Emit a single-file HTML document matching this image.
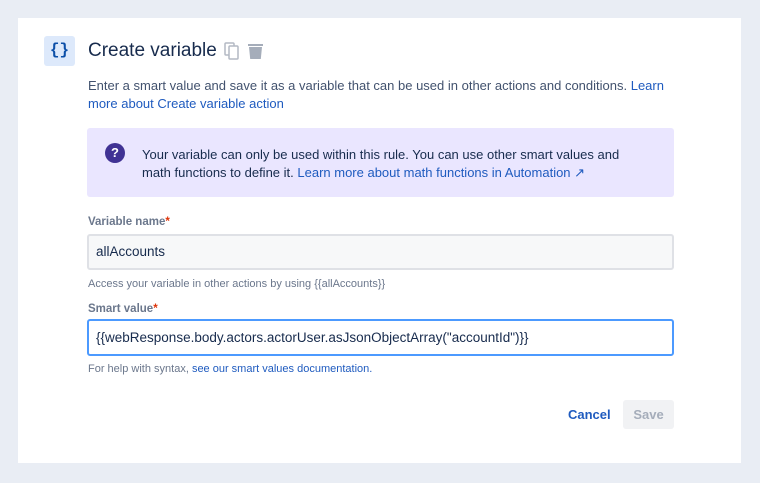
<!DOCTYPE html>
<html><head><meta charset="utf-8"><style>
*{margin:0;padding:0;box-sizing:border-box}
body{width:760px;height:483px;background:#e9edf4;font-family:"Liberation Sans",sans-serif;position:relative;overflow:hidden;color:#172b4d}
.card{position:absolute;left:18px;top:18px;width:723px;height:445px;background:#fff}
.a{position:absolute}
.link{color:#1f5bbf}
</style></head><body>
<div class="card"></div>
<div class="a" style="left:44px;top:36px;width:31px;height:30px;background:#dde9fb;border-radius:3px;color:#0c4fa8;font-weight:bold;font-size:16px;text-align:center;line-height:29px;font-family:'Liberation Mono',monospace">{}</div>
<div class="a" style="left:88px;top:40px;font-size:19px;color:#172b4d">Create variable</div>
<svg class="a" style="left:224px;top:42px" width="40" height="18" viewBox="0 0 40 18"><rect x="1" y="1" width="9" height="12" rx="1" fill="none" stroke="#b3b9c4" stroke-width="1.5"/><rect x="5" y="4" width="9" height="13" rx="1" fill="#fff" stroke="#b3b9c4" stroke-width="1.5"/><rect x="24" y="2" width="15" height="2" fill="#a5adba"/><path d="M25 5h13l-1.2 12h-10.6z" fill="#a5adba"/></svg>
<div class="a" style="left:88px;top:77px;width:600px;font-size:13px;line-height:18px;color:#42526e">Enter a smart value and save it as a variable that can be used in other actions and conditions. <span class="link">Learn more about Create variable action</span></div>
<div class="a" style="left:87px;top:128px;width:587px;height:69px;background:#eae6ff;border-radius:3px"></div>
<div class="a" style="left:105px;top:143px;width:20px;height:20px;border-radius:50%;background:#403294;color:#fff;font-weight:bold;font-size:13px;text-align:center;line-height:20px">?</div>
<div class="a" style="left:142px;top:146px;width:495px;font-size:13px;line-height:18px;color:#172b4d">Your variable can only be used within this rule. You can use other smart values and math functions to define it. <span class="link">Learn more about math functions in Automation ↗</span></div>
<div class="a" style="left:88px;top:216px;font-size:11.5px;font-weight:600;color:#6b778c">Variable name<span style="color:#de350b">*</span></div>
<div class="a" style="left:87px;top:234px;width:587px;height:36px;background:#f7f8f9;border:2px solid #dfe1e6;border-radius:3px;font-size:13.5px;padding:8px 0 0 7px">allAccounts</div>
<div class="a" style="left:88px;top:278px;font-size:11px;color:#6b778c">Access your variable in other actions by using {{allAccounts}}</div>
<div class="a" style="left:88px;top:303px;font-size:11.5px;font-weight:600;color:#6b778c">Smart value<span style="color:#de350b">*</span></div>
<div class="a" style="left:87px;top:319px;width:587px;height:37px;background:#fff;border:2px solid #4c9aff;border-radius:3px;font-size:13.5px;padding:9px 0 0 7px">{{webResponse.body.actors.actorUser.asJsonObjectArray("accountId")}}</div>
<div class="a" style="left:88px;top:363px;font-size:11px;color:#6b778c">For help with syntax, <span class="link">see our smart values documentation.</span></div>
<div class="a" style="left:568px;top:407px;font-size:13px;font-weight:bold;color:#1f5bbf">Cancel</div>
<div class="a" style="left:623px;top:400px;width:51px;height:29px;background:#f1f2f4;border-radius:3px;font-size:13px;font-weight:bold;color:#a5adba;text-align:center;line-height:29px">Save</div>
</body></html>
